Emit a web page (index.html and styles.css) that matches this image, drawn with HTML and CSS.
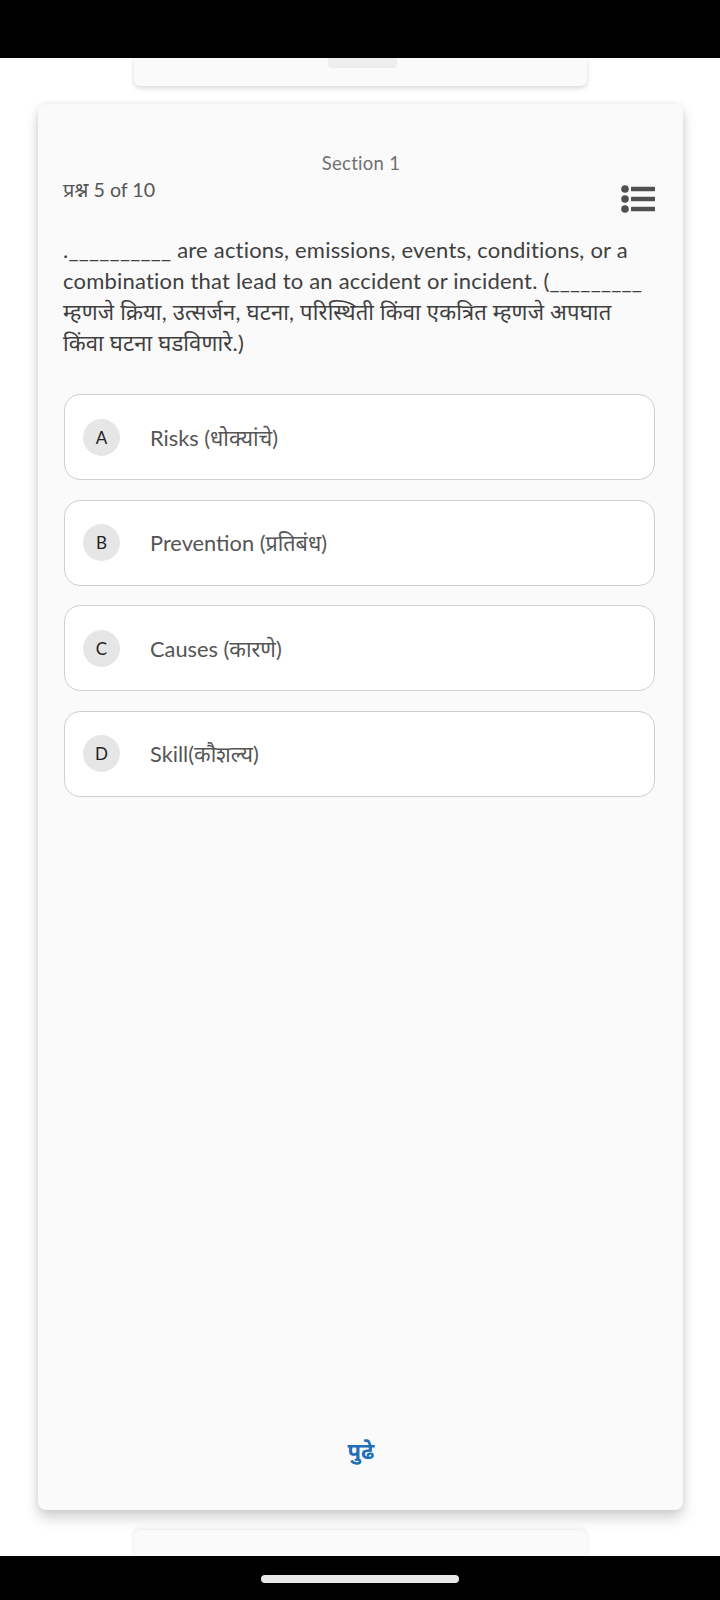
FILE: index.html
```html
<!DOCTYPE html>
<html lang="mr">
<head>
<meta charset="utf-8">
<title>Quiz</title>
<link rel="stylesheet" href="styles.css">
</head>
<body>
<div class="screen">
  <div class="status-bar"></div>
  <div class="peek peek-top"><div class="peek-tab"></div></div>
  <main class="card">
    <div class="section-title">Section 1</div>
    <div class="q-head">
      <div class="q-num"><span class="deva-s">प्रश्न</span> 5 of 10</div>
      <svg class="list-icon" width="36" height="30" viewBox="0 0 36 30">
        <circle cx="6" cy="5" r="3.8"/>
        <circle cx="6" cy="15" r="3.8"/>
        <circle cx="6" cy="25" r="3.8"/>
        <rect x="12" y="2.7" width="24" height="4.6" rx="0.6"/>
        <rect x="12" y="12.7" width="24" height="4.6" rx="0.6"/>
        <rect x="12" y="22.7" width="24" height="4.6" rx="0.6"/>
      </svg>
    </div>
    <p class="question">.__________ are actions, emissions, events, conditions, or a combination that lead to an accident or incident. (_________ <span class="deva">म्हणजे क्रिया, उत्सर्जन, घटना, परिस्थिती किंवा एकत्रित म्हणजे अपघात किंवा घटना घडविणारे.</span>)</p>
    <div class="options">
      <div class="option"><span class="badge">A</span><span class="opt-text">Risks (<span class="deva-o">धोक्यांचे</span>)</span></div>
      <div class="option"><span class="badge">B</span><span class="opt-text">Prevention (<span class="deva-o">प्रतिबंध</span>)</span></div>
      <div class="option"><span class="badge">C</span><span class="opt-text">Causes (<span class="deva-o">कारणे</span>)</span></div>
      <div class="option"><span class="badge">D</span><span class="opt-text">Skill(<span class="deva-o">कौशल्य</span>)</span></div>
    </div>
    <div class="next">पुढे</div>
  </main>
  <div class="peek peek-bottom"></div>
  <div class="nav-bar"><div class="home-pill"></div></div>
</div>
</body>
</html>
```

FILE: styles.css
```css
* { box-sizing: border-box; }
html, body { margin: 0; padding: 0; background: #ffffff; }
body { font-family: Lato, "Noto Sans", "Liberation Sans", sans-serif; }
.screen {
  width: 720px;
  height: 1600px;
  overflow: hidden;
  display: flex;
  flex-direction: column;
  background: #ffffff;
}
.status-bar { height: 58px; background: #000; flex: none; }
.peek {
  width: 453px;
  margin-left: 134px;
  background: #fafafa;
  flex: none;
}
.peek-top {
  height: 28px;
  border-radius: 0 0 6px 6px;
  box-shadow: 0 2px 5px rgba(0,0,0,0.16);
  display: flex;
  justify-content: center;
}
.peek-tab {
  width: 69px;
  height: 10px;
  margin-left: 3px;
  background: #eeeeee;
  border-radius: 0 0 4px 4px;
}
.card {
  flex: none;
  width: 645px;
  height: 1406px;
  margin: 18px 0 0 38px;
  background: #fafafa;
  border-radius: 8px;
  box-shadow: 0 8px 14px rgba(0,0,0,0.18), 0 0 6px rgba(0,0,0,0.08);
  padding: 47px 28px 44px 25px;
  display: flex;
  flex-direction: column;
  position: relative;
  z-index: 1;
}
.deva { font-size: 1em; }
.deva-s { font-size: 1.02em; }
.deva-o { font-size: 0.99em; }
.section-title {
  text-align: center;
  font-size: 18.5px;
  letter-spacing: 0.3px;
  line-height: 24px;
  color: #707070;
  padding-left: 4px;
}
.q-head {
  display: flex;
  justify-content: space-between;
  align-items: flex-start;
}
.q-num {
  font-size: 19.6px;
  line-height: 28px;
  color: #555;
}
.list-icon {
  fill: #505050;
  margin-top: 9px;
}
.question {
  margin: 20px 0 0 0;
  font-size: 22px;
  letter-spacing: 0.2px;
  line-height: 31px;
  color: #404040;
}
.options {
  margin-top: 36px;
  display: flex;
  flex-direction: column;
  gap: 19.5px;
  padding-left: 1px;
}
.option {
  height: 86px;
  background: #fff;
  border: 1px solid #cfcfcf;
  border-radius: 16px;
  display: flex;
  align-items: center;
  padding-left: 18px;
}
.badge {
  width: 37px;
  height: 37px;
  border-radius: 50%;
  background: #e6e6e6;
  color: #222;
  font-size: 17px;
  display: flex;
  align-items: center;
  justify-content: center;
  flex: none;
}
.opt-text {
  margin-left: 30px;
  font-size: 21.8px;
  color: #555;
}
.next {
  margin-top: auto;
  text-align: center;
  font-size: 22px;
  line-height: 30px;
  font-weight: bold;
  color: #1f6fb8;
  padding-left: 4px;
}
.peek-bottom {
  margin-top: 20px;
  height: 26px;
  border-radius: 6px 6px 0 0;
  box-shadow: 0 -1px 4px rgba(0,0,0,0.1);
}
.nav-bar {
  flex: 1;
  background: #000;
  display: flex;
  justify-content: center;
  padding-top: 19px;
}
.home-pill {
  width: 198px;
  height: 8px;
  border-radius: 4px;
  background: #e8e8e8;
}
```
